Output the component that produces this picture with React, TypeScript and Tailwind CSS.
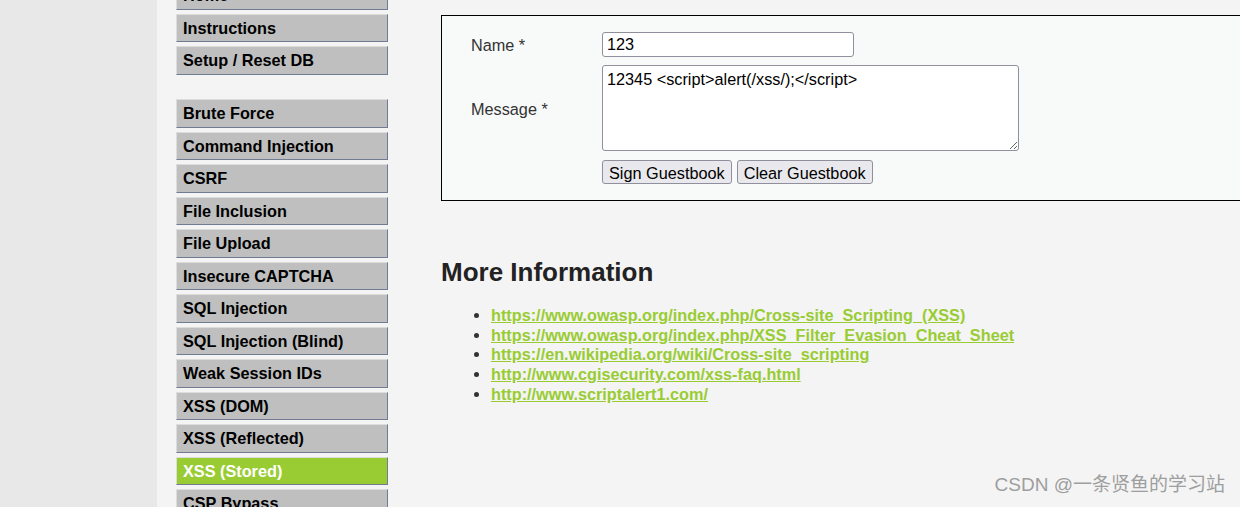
import React from "react";

const menuGroups: string[][] = [
  ["Home", "Instructions", "Setup / Reset DB"],
  [
    "Brute Force",
    "Command Injection",
    "CSRF",
    "File Inclusion",
    "File Upload",
    "Insecure CAPTCHA",
    "SQL Injection",
    "SQL Injection (Blind)",
    "Weak Session IDs",
    "XSS (DOM)",
    "XSS (Reflected)",
    "XSS (Stored)",
    "CSP Bypass",
    "JavaScript",
  ],
];

const links = [
  "https://www.owasp.org/index.php/Cross-site_Scripting_(XSS)",
  "https://www.owasp.org/index.php/XSS_Filter_Evasion_Cheat_Sheet",
  "https://en.wikipedia.org/wiki/Cross-site_scripting",
  "http://www.cgisecurity.com/xss-faq.html",
  "http://www.scriptalert1.com/",
];

const MenuItem = ({ label, selected }: { label: string; selected: boolean }) => {
  return (
    <li
      className={`flex h-[28.5px] items-center border border-t-[#dcdcdc] border-l-[#dcdcdc] border-r-[#6f7c92] border-b-[#6f7c92] pl-[6px] text-[16.25px] font-bold ${
        selected ? "bg-[#99cc33] text-white" : "bg-[#bfbfbf] text-black"
      }`}
    >
      {label}
    </li>
  );
};

export default function App() {
  return (
    <div className="relative flex h-[507px] w-[1240px] overflow-hidden font-['Liberation_Sans',Arial,sans-serif]">
      {/* left gutter */}
      <div className="w-[157px] shrink-0 bg-[#e8e8e8]" />

      <div className="flex flex-1 bg-[#f4f4f4]">
        {/* menu */}
        <nav className="ml-[19px] mt-[-19px] w-[212px] shrink-0">
          {menuGroups.map((group, gi) => (
            <ul
              key={gi}
              className={`flex flex-col gap-[4px] ${gi > 0 ? "mt-[24.5px]" : ""}`}
            >
              {group.map((item) => (
                <MenuItem key={item} label={item} selected={item === "XSS (Stored)"} />
              ))}
            </ul>
          ))}
        </nav>

        {/* body */}
        <main className="ml-[53px] min-w-0 flex-1">
          <h1 className="mt-[-25px] h-[26px] whitespace-nowrap text-[21px] font-bold leading-[26px] text-[#222]">
            Vulnerability: Stored Cross Site Scripting (XSS)
          </h1>

          <div className="mt-[14px] w-[830px] border border-black bg-[#f8f9f9] pb-[16px] pl-[29px] pt-[16px] text-[16.25px] text-[#333]">
            <div className="flex items-center">
              <label className="w-[131px] pt-[1px]">Name *</label>
              <input
                readOnly
                defaultValue="123"
                className="h-[25px] w-[252px] rounded-[3px] border border-[#8f8f9d] bg-white px-[4px] text-[16.25px] text-black outline-none"
              />
            </div>
            <div className="mt-[8px] flex items-center">
              <label className="w-[131px] pt-[1px]">Message *</label>
              <textarea
                readOnly
                defaultValue="12345 <script>alert(/xss/);</script>"
                className="h-[86px] w-[417px] rounded-[3px] border border-[#8f8f9d] bg-white p-[4px] font-['Liberation_Sans',Arial,sans-serif] text-[16.25px] leading-[18.7px] text-black outline-none"
              />
            </div>
            <div className="mt-[9px] flex gap-[5px] pl-[131px]">
              <button className="h-[24px] rounded-[3px] border border-[#8f8f9d] bg-[#e9e9ed] px-[6px] text-[16.25px] text-black">
                Sign Guestbook
              </button>
              <button className="h-[24px] rounded-[3px] border border-[#8f8f9d] bg-[#e9e9ed] px-[6px] text-[16.25px] text-black">
                Clear Guestbook
              </button>
            </div>
          </div>

          <h2 className="mt-[55.5px] text-[26px] font-bold leading-[30px] text-[#222]">
            More Information
          </h2>
          <ul className="mt-[19px] list-disc pl-[50px] text-[16.25px] leading-[19.75px] text-[#333]">
            {links.map((link) => (
              <li key={link}>
                <a href={link} className="font-bold text-[#99cc33] underline">
                  {link}
                </a>
              </li>
            ))}
          </ul>
        </main>
      </div>

      {/* watermark */}
      <div className="absolute bottom-[8px] right-[15px] whitespace-nowrap font-['Liberation_Sans','Noto_Sans_CJK_SC',sans-serif] text-[19px] text-[#9e9e9e]">
        CSDN @一条贤鱼的学习站
      </div>
    </div>
  );
}
